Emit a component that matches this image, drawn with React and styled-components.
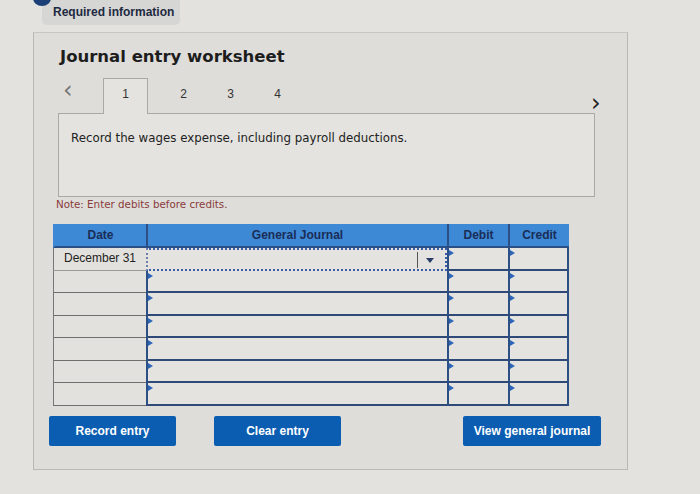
import React from "react";
import styled, { createGlobalStyle } from "styled-components";

const GlobalStyle = createGlobalStyle`
  html, body {
    margin: 0;
    padding: 0;
    background: #e3e2de;
  }
`;

const rows = ["December 31", "", "", "", "", "", ""];

export default function App() {
  return (
    <>
      <GlobalStyle />
      <Page>
        <TopBar>
          <InfoTab>
            <Badge />
            Required information
          </InfoTab>
        </TopBar>
        <Panel>
          <Title>Journal entry worksheet</Title>
          <TabRow>
            <Arrow>&lsaquo;</Arrow>
            <Tab $active>1</Tab>
            <Tab>2</Tab>
            <Tab>3</Tab>
            <Tab>4</Tab>
            <Arrow $right>&rsaquo;</Arrow>
          </TabRow>
          <Prompt>Record the wages expense, including payroll deductions.</Prompt>
          <Note>Note: Enter debits before credits.</Note>
          <Grid>
            <Head>Date</Head>
            <Head $dark>General Journal</Head>
            <Head $dark>Debit</Head>
            <Head $dark>Credit</Head>
            {rows.map((date, i) => (
              <React.Fragment key={i}>
                <DateCell $first={i === 0}>{date}</DateCell>
                <EntryCell $focus={i === 0}>{i === 0 && <Caret />}</EntryCell>
                <EntryCell />
                <EntryCell $end />
              </React.Fragment>
            ))}
          </Grid>
          <Buttons>
            <Button>Record entry</Button>
            <Button $gap>Clear entry</Button>
            <Button $push $wide>
              View general journal
            </Button>
          </Buttons>
        </Panel>
      </Page>
    </>
  );
}

const Page = styled.div`
  width: 700px;
  height: 494px;
  overflow: hidden;
  background: #e3e2de;
  font-family: "Liberation Sans", Arial, sans-serif;
`;

const TopBar = styled.div`
  height: 32px;
  padding-left: 42px;
`;

const InfoTab = styled.div`
  position: relative;
  display: inline-block;
  width: 138px;
  height: 25px;
  padding-left: 11px;
  box-sizing: border-box;
  line-height: 24px;
  background: #d6d6d4;
  border-radius: 0 0 5px 5px;
  color: #1d2940;
  font-size: 12px;
  font-weight: bold;
`;

const Badge = styled.span`
  position: absolute;
  left: -9px;
  top: -10px;
  width: 18px;
  height: 16px;
  border-radius: 50%;
  background: #1c3f78;
`;

const Panel = styled.div`
  margin-left: 33px;
  width: 595px;
  height: 438px;
  box-sizing: border-box;
  border: 1px solid #b8b8b5;
  border-top-color: #c6c6c3;
  background: #dedddA;
  padding: 14px 32px 0 17px;
`;

const Title = styled.h2`
  margin: 0 0 0 9px;
  font-family: "DejaVu Sans", Verdana, sans-serif;
  font-size: 16.5px;
  font-weight: bold;
  line-height: 20px;
  color: #1d1d1d;
`;

const TabRow = styled.div`
  display: flex;
  align-items: flex-end;
  height: 36px;
  margin-top: 10px;
  padding-left: 12px;
`;

const Arrow = styled.span`
  align-self: center;
  width: 26px;
  margin-top: ${(p) => (p.$right ? "16px" : "-10px")};
  margin-left: ${(p) => (p.$right ? "auto" : "0")};
  margin-right: ${(p) => (p.$right ? "-22px" : "14px")};
  font-family: "DejaVu Sans", sans-serif;
  font-size: 24px;
  color: ${(p) => (p.$right ? "#222" : "#777")};
  line-height: 20px;
`;

const Tab = styled.div`
  width: ${(p) => (p.$active ? "45px" : "47px")};
  height: 36px;
  box-sizing: border-box;
  padding-top: 8px;
  text-align: center;
  font-size: 12px;
  color: #333;
  position: relative;
  z-index: 1;
  margin-bottom: -1px;
  background: ${(p) => (p.$active ? "#e4e3df" : "transparent")};
  border: 1px solid ${(p) => (p.$active ? "#a9a9a6" : "transparent")};
  border-bottom: none;
  margin-right: ${(p) => (p.$active ? "12px" : "0")};
`;

const Prompt = styled.div`
  margin-left: 7px;
  height: 84px;
  box-sizing: border-box;
  border: 1px solid #a9a9a6;
  background: #e4e3df;
  padding: 17px 12px 0;
  font-family: "DejaVu Sans", Verdana, sans-serif;
  font-size: 11.8px;
  color: #222;
`;

const Note = styled.div`
  margin: 1px 0 0 5px;
  height: 15px;
  font-family: "DejaVu Sans", Verdana, sans-serif;
  font-size: 10.3px;
  color: #8a3b3b;
`;

const Grid = styled.div`
  display: grid;
  grid-template-columns: 93px 301px 61px 61px;
  grid-template-rows: 24px repeat(7, 22.5px);
  margin: 11px 0 0 2px;
  width: 516px;
`;

const Head = styled.div`
  background: #3e89d5;
  color: #1a2d57;
  font-weight: bold;
  font-size: 12px;
  display: flex;
  align-items: center;
  justify-content: center;
  border-left: 2px solid ${(p) => (p.$dark ? "#2c4f86" : "#3e89d5")};
  border-bottom: 2px solid #2c4f86;
  &:last-of-type {
    border-right: 2px solid #2c4f86;
  }
`;

const DateCell = styled.div`
  background: #e2e1dd;
  border-left: 1px solid #777;
  border-bottom: 1px solid ${(p) => (p.$first ? "#9a9a98" : "#6f6f6f")};
  font-size: 12px;
  color: #222;
  padding-left: 10px;
  line-height: 21px;
`;

const EntryCell = styled.div`
  position: relative;
  background: #e4e3df;
  border-left: 2px solid #2c4f86;
  border-right: ${(p) => (p.$end ? "2px solid #2c4f86" : "none")};
  border-bottom: 2px solid #2f4a78;
  ${(p) =>
    p.$focus &&
    `
    border: 2px dotted #3a5fa8;
    border-left-color: #6b7fa8;
  `}
  &::before {
    content: "";
    position: absolute;
    left: 0;
    top: 2px;
    border-left: 5px solid #2d66b8;
    border-top: 3px solid transparent;
    border-bottom: 3px solid transparent;
    display: ${(p) => (p.$focus ? "none" : "block")};
  }
`;

const Caret = styled.span`
  position: absolute;
  right: 4px;
  top: 2px;
  width: 23px;
  height: 16px;
  border-left: 1px solid #555;
  &::after {
    content: "";
    position: absolute;
    left: 8px;
    top: 6px;
    border-top: 5px solid #2a3d66;
    border-left: 4px solid transparent;
    border-right: 4px solid transparent;
  }
`;

const Buttons = styled.div`
  display: flex;
  align-items: center;
  margin: 10px -6px 0 -2px;
`;

const Button = styled.button`
  width: ${(p) => (p.$wide ? "138px" : "127px")};
  height: 30px;
  margin-left: ${(p) => (p.$push ? "auto" : p.$gap ? "38px" : "0")};
  border: none;
  border-radius: 2px;
  background: #0b5db1;
  color: #fff;
  font-family: "Liberation Sans", Arial, sans-serif;
  font-size: 12px;
  font-weight: bold;
  cursor: pointer;
`;
